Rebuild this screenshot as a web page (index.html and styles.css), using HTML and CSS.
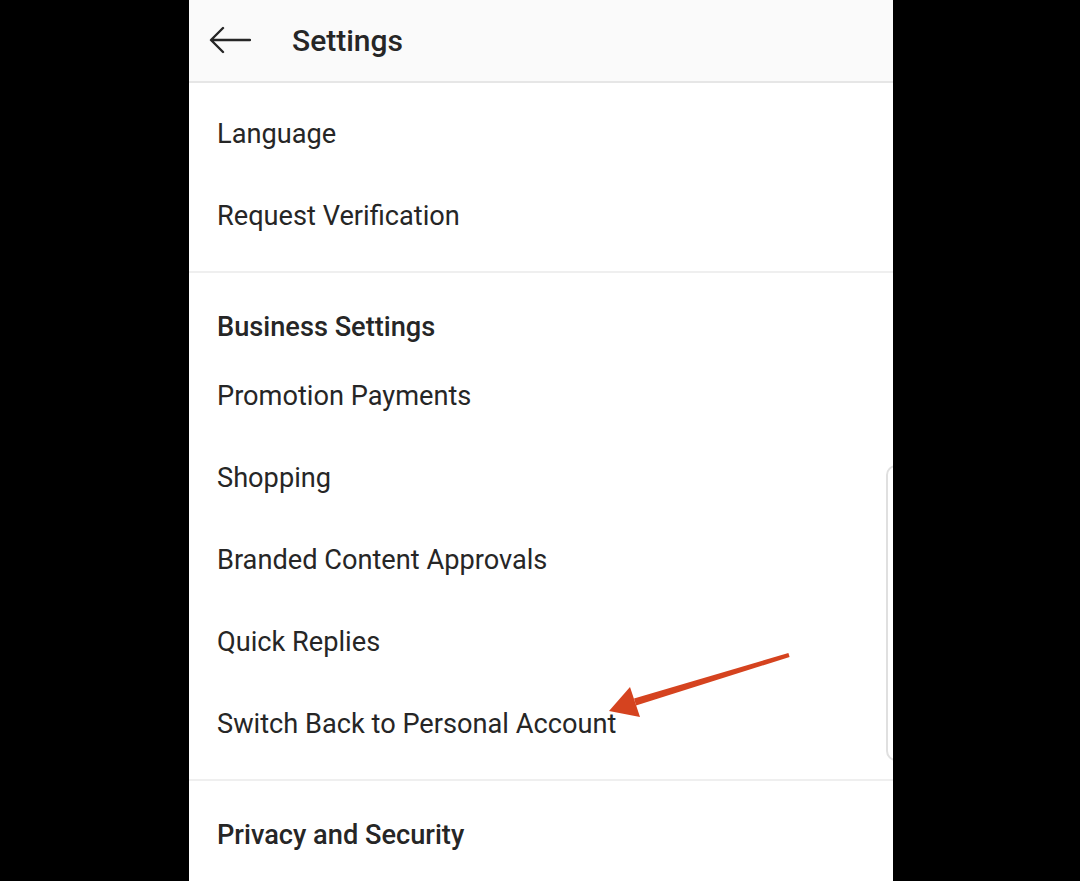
FILE: index.html
```html
<!DOCTYPE html>
<html lang="en">
<head>
    <meta charset="UTF-8">
    <meta name="viewport" content="width=device-width, initial-scale=1.0">
    <title>Settings</title>
    <link rel="stylesheet" href="styles.css">
</head>
<body>
    <div class="screen">
        <!-- Top bar -->
        <div class="topbar">
            <svg class="back" width="42" height="28" viewBox="0 0 42 28">
                <path d="M41 14H3M14 2L2 14l12 12" fill="none" stroke="#262626" stroke-width="2.4" stroke-linecap="round" stroke-linejoin="round"/>
            </svg>
            <h1 class="title">Settings</h1>
        </div>

        <div class="section first">
            <div class="item">Language</div>
            <div class="item">Request Verification</div>
        </div>

        <div class="section">
            <div class="heading">Business Settings</div>
            <div class="item">Promotion Payments</div>
            <div class="item">Shopping</div>
            <div class="item">Branded Content Approvals</div>
            <div class="item">Quick Replies</div>
            <div class="item">Switch Back to Personal Account</div>
        </div>

        <div class="section last">
            <div class="heading">Privacy and Security</div>
        </div>

        <!-- edge panel handle -->
        <div class="edge"></div>

        <!-- annotation arrow -->
        <svg class="arrow" width="200" height="80" viewBox="0 0 200 80">
            <path d="M179.4 5.1L180.6 8.9L27 57.5L25 50.5Z" fill="#d5431f"/>
            <path d="M0 63L21 39L31 69Z" fill="#d5431f"/>
        </svg>
    </div>
</body>
</html>
```

FILE: styles.css
```css
/* General Styles */
body {
    margin: 0;
    background-color: #000;
    font-family: Roboto, "Noto Sans", sans-serif;
    color: #262626;
}

.screen {
    position: relative;
    width: 704px;
    height: 881px;
    margin-left: 189px;
    background-color: #fff;
    overflow: hidden;
}

.topbar {
    display: flex;
    align-items: center;
    height: 83px;
    background-color: #fafafa;
    border-bottom: 2px solid #e6e6e6;
    box-sizing: border-box;
}

.back {
    margin-left: 20px;
    margin-top: -2px;
}

.title {
    margin: 0 0 0 41px;
    font-size: 30px;
    font-weight: 500;
    color: #262626;
}

.section {
    padding-bottom: 14px;
    border-bottom: 2px solid #efefef;
}

.section.first {
    padding-top: 10px;
}

.section.last {
    border-bottom: none;
}

.item, .heading {
    padding-left: 28px;
    font-size: 27.2px;
    line-height: 28px;
}

.item {
    padding-top: 27px;
    padding-bottom: 27px;
    color: #262626;
}

.heading {
    padding-top: 40px;
    padding-bottom: 14px;
    font-weight: 500;
}

.edge {
    position: absolute;
    left: 697px;
    top: 465px;
    width: 20px;
    height: 296px;
    border: 2px solid #e0e0e0;
    border-radius: 10px;
    box-sizing: border-box;
}

.arrow {
    position: absolute;
    left: 420px;
    top: 648px;
}
```
